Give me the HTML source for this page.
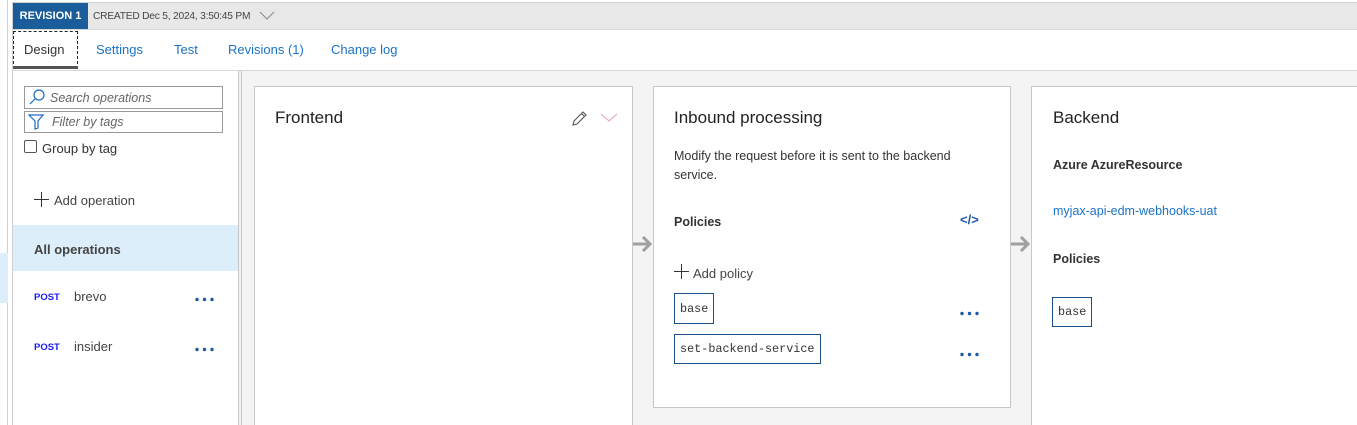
<!DOCTYPE html>
<html><head><meta charset="utf-8"><style>
*{box-sizing:border-box;margin:0;padding:0}
html,body{width:1357px;height:425px;overflow:hidden}
body{background:#fff;font-family:"Segoe UI","Liberation Sans",sans-serif;color:#323130;position:relative}
.a{position:absolute}
.t{white-space:nowrap}
.box{position:absolute;background:#fff;border:1px solid #c8c8c8}
.code{position:absolute;border:1px solid #1d4f8a;font-family:"Liberation Mono",monospace;font-size:11.8px;color:#333;padding:0 5px;line-height:28px}
</style></head><body>
<div class="a" style="left:0;top:0;width:8px;height:425px;background:#fff;border-right:1px solid #d0d0d0"></div>
<div class="a" style="left:0;top:253px;width:8px;height:50px;background:#ddeefb"></div>
<div class="a" style="left:12px;top:2px;width:1345px;height:1px;background:#d0d0d0"></div>
<div class="a" style="left:12px;top:3px;width:1345px;height:27px;background:#e8e8e8;border-bottom:1px solid #d8d8d8"></div>
<div class="a" style="left:12px;top:3px;width:1px;height:422px;background:#d0d0d0"></div>
<div class="a t" style="left:13px;top:3px;width:75px;height:26px;background:#1b5d9a;color:#fff;font-size:11px;font-weight:bold;line-height:26px;text-align:center">REVISION 1</div>
<div class="a t" style="left:93px;top:4px;font-size:10.2px;line-height:26px;color:#444;letter-spacing:-0.2px">CREATED Dec 5, 2024, 3:50:45 PM</div>
<svg class="a" style="left:259px;top:11px" width="16" height="10"><path d="M1 1L8 8L15 1" stroke="#888" fill="none"/></svg>
<div class="a" style="left:13px;top:31px;width:65px;height:38px;border:1px dashed #222"></div>
<div class="a" style="left:13px;top:66px;width:65px;height:3px;background:#555"></div>
<div class="a t" style="left:24px;top:42px;font-size:13px;color:#333">Design</div>
<div class="a t" style="left:96px;top:42px;font-size:13px;color:#1a73c8">Settings</div>
<div class="a t" style="left:174px;top:42px;font-size:13px;color:#1a73c8">Test</div>
<div class="a t" style="left:228px;top:42px;font-size:13px;color:#1a73c8">Revisions (1)</div>
<div class="a t" style="left:331px;top:42px;font-size:13px;color:#1a73c8">Change log</div>
<div class="a" style="left:13px;top:70px;width:1344px;height:1px;background:#d8d8d8"></div>
<div class="a" style="left:238px;top:71px;width:4px;height:354px;background:#f0f0f0;border-left:1px solid #c8c8c8;border-right:1px solid #c8c8c8"></div>
<div class="a" style="left:242px;top:71px;width:1115px;height:354px;background:#f4f4f4"></div>
<div class="a" style="left:24px;top:86px;width:199px;height:23px;border:1px solid #999"></div>
<svg class="a" style="left:28px;top:88px" width="18" height="18"><circle cx="11" cy="7" r="5" stroke="#1a6cc0" fill="none" stroke-width="1.2"/><path d="M7.5 10.5L2 16" stroke="#1a6cc0" stroke-width="1.2"/></svg>
<div class="a t" style="left:50px;top:91px;font-size:12.5px;font-style:italic;color:#666">Search operations</div>
<div class="a" style="left:24px;top:111px;width:199px;height:22px;border:1px solid #999"></div>
<svg class="a" style="left:28px;top:113px" width="18" height="18"><path d="M1 2H15L10 8V15L7 16V8Z" stroke="#1a6cc0" fill="none" stroke-width="1.2"/></svg>
<div class="a t" style="left:52px;top:115px;font-size:12.5px;font-style:italic;color:#666">Filter by tags</div>
<div class="a" style="left:24px;top:140px;width:13px;height:13px;border:1px solid #555;border-radius:2px"></div>
<div class="a t" style="left:42px;top:141px;font-size:13px;color:#333">Group by tag</div>
<svg class="a" style="left:34px;top:192px" width="15" height="15"><path d="M7.5 0V15M0 7.5H15" stroke="#333" stroke-width="1"/></svg>
<div class="a t" style="left:54px;top:193px;font-size:13px;color:#444">Add operation</div>
<div class="a" style="left:13px;top:225px;width:225px;height:46px;background:#ddeefb"></div>
<div class="a t" style="left:34px;top:242px;font-size:13px;font-weight:bold;color:#444">All operations</div>
<div class="a t" style="left:34px;top:292px;font-size:9.5px;font-weight:bold;color:#1a1aee">POST</div>
<div class="a t" style="left:74px;top:289px;font-size:13px;color:#444">brevo</div>
<svg class="a" style="left:195px;top:297px" width="19" height="5"><g fill="#1d5aa5"><circle cx="2" cy="2.5" r="1.7"/><circle cx="9.5" cy="2.5" r="1.7"/><circle cx="17" cy="2.5" r="1.7"/></g></svg>
<div class="a t" style="left:34px;top:342px;font-size:9.5px;font-weight:bold;color:#1a1aee">POST</div>
<div class="a t" style="left:74px;top:339px;font-size:13px;color:#444">insider</div>
<svg class="a" style="left:195px;top:347px" width="19" height="5"><g fill="#1d5aa5"><circle cx="2" cy="2.5" r="1.7"/><circle cx="9.5" cy="2.5" r="1.7"/><circle cx="17" cy="2.5" r="1.7"/></g></svg>

<div class="box" style="left:254px;top:86px;width:379px;height:345px"></div>
<div class="a t" style="left:275px;top:108px;font-size:17px;color:#222">Frontend</div>
<svg class="a" style="left:571px;top:110px" width="18" height="17"><path d="M2 15L3 11L12 2L15 5L6 14Z M10.5 3.5L13.5 6.5" stroke="#555" fill="none" stroke-width="1.1"/></svg>
<svg class="a" style="left:600px;top:113px" width="18" height="10"><path d="M1 1L9 8L17 1" stroke="#e8a0a8" fill="none"/></svg>

<svg class="a" style="left:633px;top:236px" width="20" height="16"><path d="M0 8H17M10 1L17 8L10 15" stroke="#a0a0a0" stroke-width="3" fill="none"/></svg>
<svg class="a" style="left:1011px;top:236px" width="20" height="16"><path d="M0 8H17M10 1L17 8L10 15" stroke="#a0a0a0" stroke-width="3" fill="none"/></svg>

<div class="box" style="left:653px;top:86px;width:358px;height:322px"></div>
<div class="a t" style="left:674px;top:108px;font-size:17px;color:#222">Inbound processing</div>
<div class="a" style="left:674px;top:147px;width:310px;font-size:12.5px;line-height:19px;color:#333">Modify the request before it is sent to the backend service.</div>
<div class="a t" style="left:674px;top:215px;font-size:12.5px;font-weight:600;color:#333">Policies</div>
<div class="a t" style="left:960px;top:212px;font-size:13px;font-weight:bold;color:#1d5aa5">&lt;/&gt;</div>
<svg class="a" style="left:674px;top:264px" width="15" height="15"><path d="M7.5 0V15M0 7.5H15" stroke="#333" stroke-width="1"/></svg>
<div class="a t" style="left:693px;top:266px;font-size:13px;color:#444">Add policy</div>
<div class="code" style="left:674px;top:293px;height:31px;line-height:30px">base</div>
<svg class="a" style="left:960px;top:311px" width="19" height="5"><g fill="#1d5aa5"><circle cx="2" cy="2.5" r="1.7"/><circle cx="9.5" cy="2.5" r="1.7"/><circle cx="17" cy="2.5" r="1.7"/></g></svg>
<div class="code" style="left:674px;top:334px;height:30px;line-height:29px;width:147px">set-backend-service</div>
<svg class="a" style="left:960px;top:352px" width="19" height="5"><g fill="#1d5aa5"><circle cx="2" cy="2.5" r="1.7"/><circle cx="9.5" cy="2.5" r="1.7"/><circle cx="17" cy="2.5" r="1.7"/></g></svg>

<div class="box" style="left:1031px;top:86px;width:340px;height:345px"></div>
<div class="a t" style="left:1053px;top:108px;font-size:17px;color:#222">Backend</div>
<div class="a t" style="left:1053px;top:158px;font-size:12.5px;font-weight:600;color:#333">Azure AzureResource</div>
<div class="a t" style="left:1053px;top:204px;font-size:12.5px;color:#1a73c8">myjax-api-edm-webhooks-uat</div>
<div class="a t" style="left:1053px;top:252px;font-size:12.5px;font-weight:600;color:#333">Policies</div>
<div class="code" style="left:1052px;top:297px;height:30px;line-height:29px">base</div>
</body></html>
